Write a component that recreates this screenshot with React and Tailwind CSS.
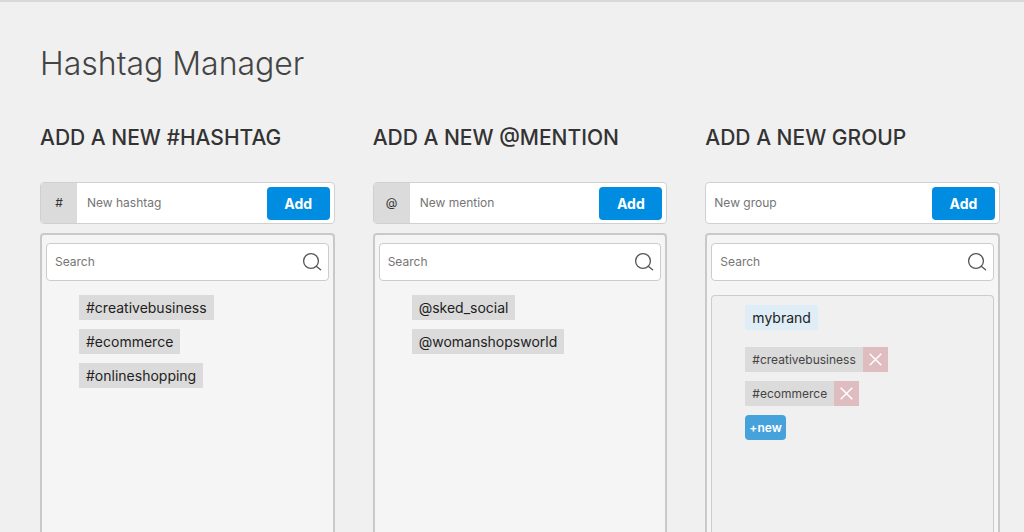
import React, { useState } from 'react';

const SearchIcon = () => (
  <svg className="w-5 h-5 shrink-0" viewBox="0 0 20 20" fill="none" stroke="#555555" strokeWidth="1.3" aria-hidden="true">
    <circle cx="9" cy="9" r="7.4" />
    <path d="M14.2 14.2L18.6 17.8" strokeLinecap="round" />
  </svg>
);

const CrossIcon = () => (
  <svg className="w-[13px] h-[13px]" viewBox="0 0 13 13" fill="none" stroke="white" strokeWidth="1.5" aria-hidden="true">
    <path d="M0.7 0.7L12.3 12.3M12.3 0.7L0.7 12.3" />
  </svg>
);

const AddForm = ({ prefix, label, onAdd }) => {
  const [value, setValue] = useState('');

  const handleSubmit = (e) => {
    e.preventDefault();
    if (!value.trim()) return;
    onAdd(value.trim());
    setValue('');
  };

  return (
    <form onSubmit={handleSubmit} className="flex h-[42px] bg-white border border-[#d0d0d0] rounded overflow-hidden">
      {prefix && (
        <span className="w-9 shrink-0 flex items-center justify-center bg-[#dbdbdb] text-[12px] text-[#333333]">{prefix}</span>
      )}
      <input
        type="text"
        aria-label={label}
        placeholder={label}
        value={value}
        onChange={(e) => setValue(e.target.value)}
        className={`flex-1 min-w-0 text-[12px] text-[#333333] placeholder-[#757575] focus:outline-none ${prefix ? 'px-[10px]' : 'px-2'}`}
      />
      <button type="submit" className="w-[63px] mt-1 mb-[3px] mr-1 shrink-0 rounded bg-[#008de1] text-white text-[14px] font-bold">
        Add
      </button>
    </form>
  );
};

const Panel = ({ name, children }) => {
  const [query, setQuery] = useState('');

  return (
    <div className="flex-1 flex flex-col mt-[9px] px-1 pt-2 border-2 border-b-0 border-[#c9c9c9] rounded-t bg-[#f5f5f5]">
      <div className="flex items-center h-[38px] pl-2 pr-[6px] bg-white border border-[#cccccc] rounded">
        <input
          type="text"
          aria-label={`Search ${name}`}
          placeholder="Search"
          value={query}
          onChange={(e) => setQuery(e.target.value)}
          className="flex-1 min-w-0 text-[12px] text-[#333333] placeholder-[#757575] focus:outline-none"
        />
        <SearchIcon />
      </div>
      {children(query.toLowerCase())}
    </div>
  );
};

const TagList = ({ tags }) => (
  <ul className="flex flex-col items-start gap-[9px] pt-[14px] pl-[33px]">
    {tags.map((tag) => (
      <li key={tag} className="h-[25px] px-[7px] flex items-center bg-[#dbdbdb] text-[14px] text-[#222222]">{tag}</li>
    ))}
  </ul>
);

const Column = ({ title, children }) => (
  <section className="flex flex-col min-w-0">
    <h2 className="mb-[30px] text-[21px] leading-7 font-medium text-[#333333] whitespace-nowrap">{title}</h2>
    {children}
  </section>
);

const App = () => {
  const [hashtags, setHashtags] = useState(['#creativebusiness', '#ecommerce', '#onlineshopping']);
  const [mentions, setMentions] = useState(['@sked_social', '@womanshopsworld']);
  const [groups, setGroups] = useState([{ name: 'mybrand', tags: ['#creativebusiness', '#ecommerce'] }]);

  const removeTag = (name, tag) => {
    setGroups(groups.map((g) => (g.name === name ? { ...g, tags: g.tags.filter((t) => t !== tag) } : g)));
  };

  return (
    <div className="min-h-screen flex flex-col bg-[#f0f0f0] border-t-2 border-[#d8d8d8] font-['Inter',sans-serif]">
      <h1 className="pt-10 pl-10 text-[32px] leading-[44px] font-light text-[#444444]">Hashtag Manager</h1>

      <main className="flex-1 grid grid-cols-3 gap-[38px] pt-[38px] pl-10 pr-6">
        <Column title="ADD A NEW #HASHTAG">
          <AddForm prefix="#" label="New hashtag" onAdd={(v) => setHashtags([...hashtags, '#' + v])} />
          <Panel name="hashtags">
            {(query) => <TagList tags={hashtags.filter((t) => t.toLowerCase().includes(query))} />}
          </Panel>
        </Column>

        <Column title="ADD A NEW @MENTION">
          <AddForm prefix="@" label="New mention" onAdd={(v) => setMentions([...mentions, '@' + v])} />
          <Panel name="mentions">
            {(query) => <TagList tags={mentions.filter((t) => t.toLowerCase().includes(query))} />}
          </Panel>
        </Column>

        <Column title="ADD A NEW GROUP">
          <AddForm label="New group" onAdd={(v) => setGroups([...groups, { name: v, tags: [] }])} />
          <Panel name="groups">
            {(query) => (
              <div className="flex-1 mt-[14px] pt-[9px] pl-[33px] border border-b-0 border-[#cccccc] rounded-t bg-[#f0f0f0]">
                {groups.filter((g) => g.name.toLowerCase().includes(query)).map((group) => (
                  <div key={group.name} className="flex flex-col items-start mb-4">
                    <h3 className="h-[25px] px-[7px] mb-[17px] flex items-center bg-[#dfeef6] text-[14px] text-[#222222]">{group.name}</h3>
                    <ul className="flex flex-col items-start gap-[9px] mb-[9px]">
                      {group.tags.map((tag) => (
                        <li key={tag} className="flex h-[25px] bg-[#dbdbdb] text-[12px] text-[#444444]">
                          <span className="px-[7px] flex items-center">{tag}</span>
                          <button
                            type="button"
                            aria-label={`Remove ${tag}`}
                            onClick={() => removeTag(group.name, tag)}
                            className="w-[25px] flex items-center justify-center bg-[#dfbcc0]"
                          >
                            <CrossIcon />
                          </button>
                        </li>
                      ))}
                    </ul>
                    <button type="button" className="h-[25px] px-1 rounded bg-[#46a2da] text-white text-[12px] font-semibold">+new</button>
                  </div>
                ))}
              </div>
            )}
          </Panel>
        </Column>
      </main>
    </div>
  );
};

export default App;
